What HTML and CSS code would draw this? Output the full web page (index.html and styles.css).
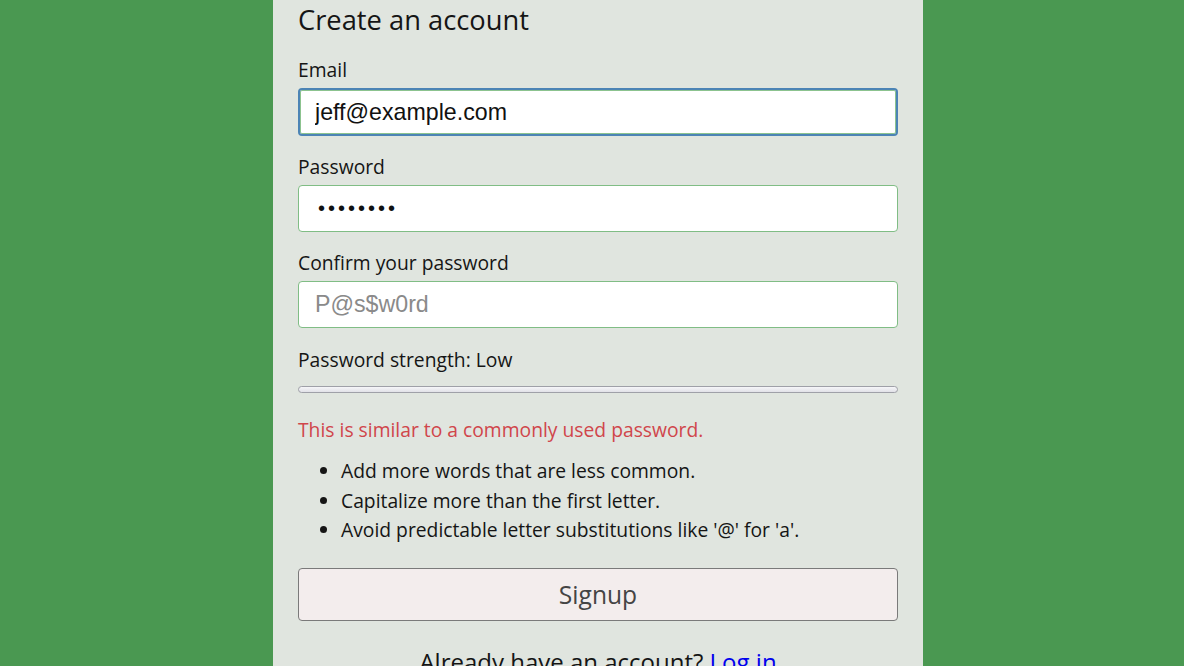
FILE: index.html
```html
<!DOCTYPE html>
<html lang="en">
<head>
<meta charset="utf-8">
<title>Create an account</title>
<link rel="stylesheet" href="styles.css">
</head>
<body>
<main class="card">
  <h1 class="title">Create an account</h1>
  <form class="form">
    <div class="field">
      <label class="label" for="email">Email</label>
      <input class="input input-focus" id="email" type="email" value="jeff@example.com">
    </div>
    <div class="field">
      <label class="label" for="pw">Password</label>
      <input class="input input-pw" id="pw" type="password" value="password">
    </div>
    <div class="field">
      <label class="label" for="pw2">Confirm your password</label>
      <input class="input" id="pw2" type="password" placeholder="P@s$w0rd">
    </div>
    <div class="strength">
      <div class="label">Password strength: Low</div>
      <div class="meter"></div>
    </div>
    <p class="warning">This is similar to a commonly used password.</p>
    <ul class="tips">
      <li>Add more words that are less common.</li>
      <li>Capitalize more than the first letter.</li>
      <li>Avoid predictable letter substitutions like '@' for 'a'.</li>
    </ul>
    <button class="btn" type="button">Signup</button>
  </form>
  <p class="footer">Already have an account? <a class="link" href="#">Log in</a></p>
</main>
</body>
</html>
```
FILE: styles.css
```css
html, body {
  margin: 0;
  padding: 0;
}
body {
  background: #4a9851;
  display: flex;
  justify-content: center;
  font-family: "Open Sans", "Noto Sans", sans-serif;
  color: #111;
  height: 666px;
  overflow: hidden;
}
.card {
  width: 650px;
  margin-left: 12px;
  box-sizing: border-box;
  background: #e0e5df;
  padding: 0 25px;
  min-height: 720px;
}
.title {
  margin: 0;
  font-size: 27.3px;
  font-weight: 400;
  line-height: 40px;
  color: #151515;
}
.form {
  display: flex;
  flex-direction: column;
  margin-top: 16px;
}
.field {
  display: flex;
  flex-direction: column;
  margin-bottom: 17px;
}
.label {
  font-size: 19.3px;
  line-height: 28px;
  margin-bottom: 4px;
  color: #151515;
}
.input {
  box-sizing: border-box;
  height: 47px;
  width: 600px;
  border: 1px solid #80bd85;
  border-radius: 4px;
  background: #fff;
  padding: 0 15px 0 16px;
  font-family: "Liberation Sans", Arial, sans-serif;
  font-size: 23.2px;
  color: #111;
  outline: none;
}
.input::placeholder {
  color: #8a8a8a;
}
.input-focus {
  height: 48px;
  border: 2px solid #4c84b5;
  box-shadow: inset 0 0 0 1px #8cc38f;
  padding-left: 15px;
}
.input-pw {
  letter-spacing: 3px;
  font-size: 20px;
  padding-left: 19px;
}
.strength {
  margin-top: 1px;
}
.meter {
  box-sizing: border-box;
  width: 600px;
  height: 7px;
  margin-top: 12px;
  border: 1px solid #9fa0a8;
  border-radius: 4px;
  background: linear-gradient(#f6f6f9, #e1e1e7);
}
.warning {
  margin: 23px 0 0;
  font-size: 19.3px;
  line-height: 28px;
  color: #d0464b;
}
.tips {
  margin: 12px 0 0;
  padding-left: 43px;
  font-size: 19.3px;
  line-height: 29.5px;
  color: #151515;
}
.btn {
  margin-top: 23px;
  width: 600px;
  height: 53px;
  background: #f3eded;
  border: 1px solid #7a7a7a;
  border-radius: 4px;
  font-family: "Open Sans", "Noto Sans", sans-serif;
  font-size: 24.6px;
  color: #444;
  cursor: pointer;
}
.footer {
  margin: 25px 0 0;
  text-align: center;
  font-size: 24px;
  line-height: 32px;
  color: #151515;
}
.link {
  color: #0000ee;
}
```
